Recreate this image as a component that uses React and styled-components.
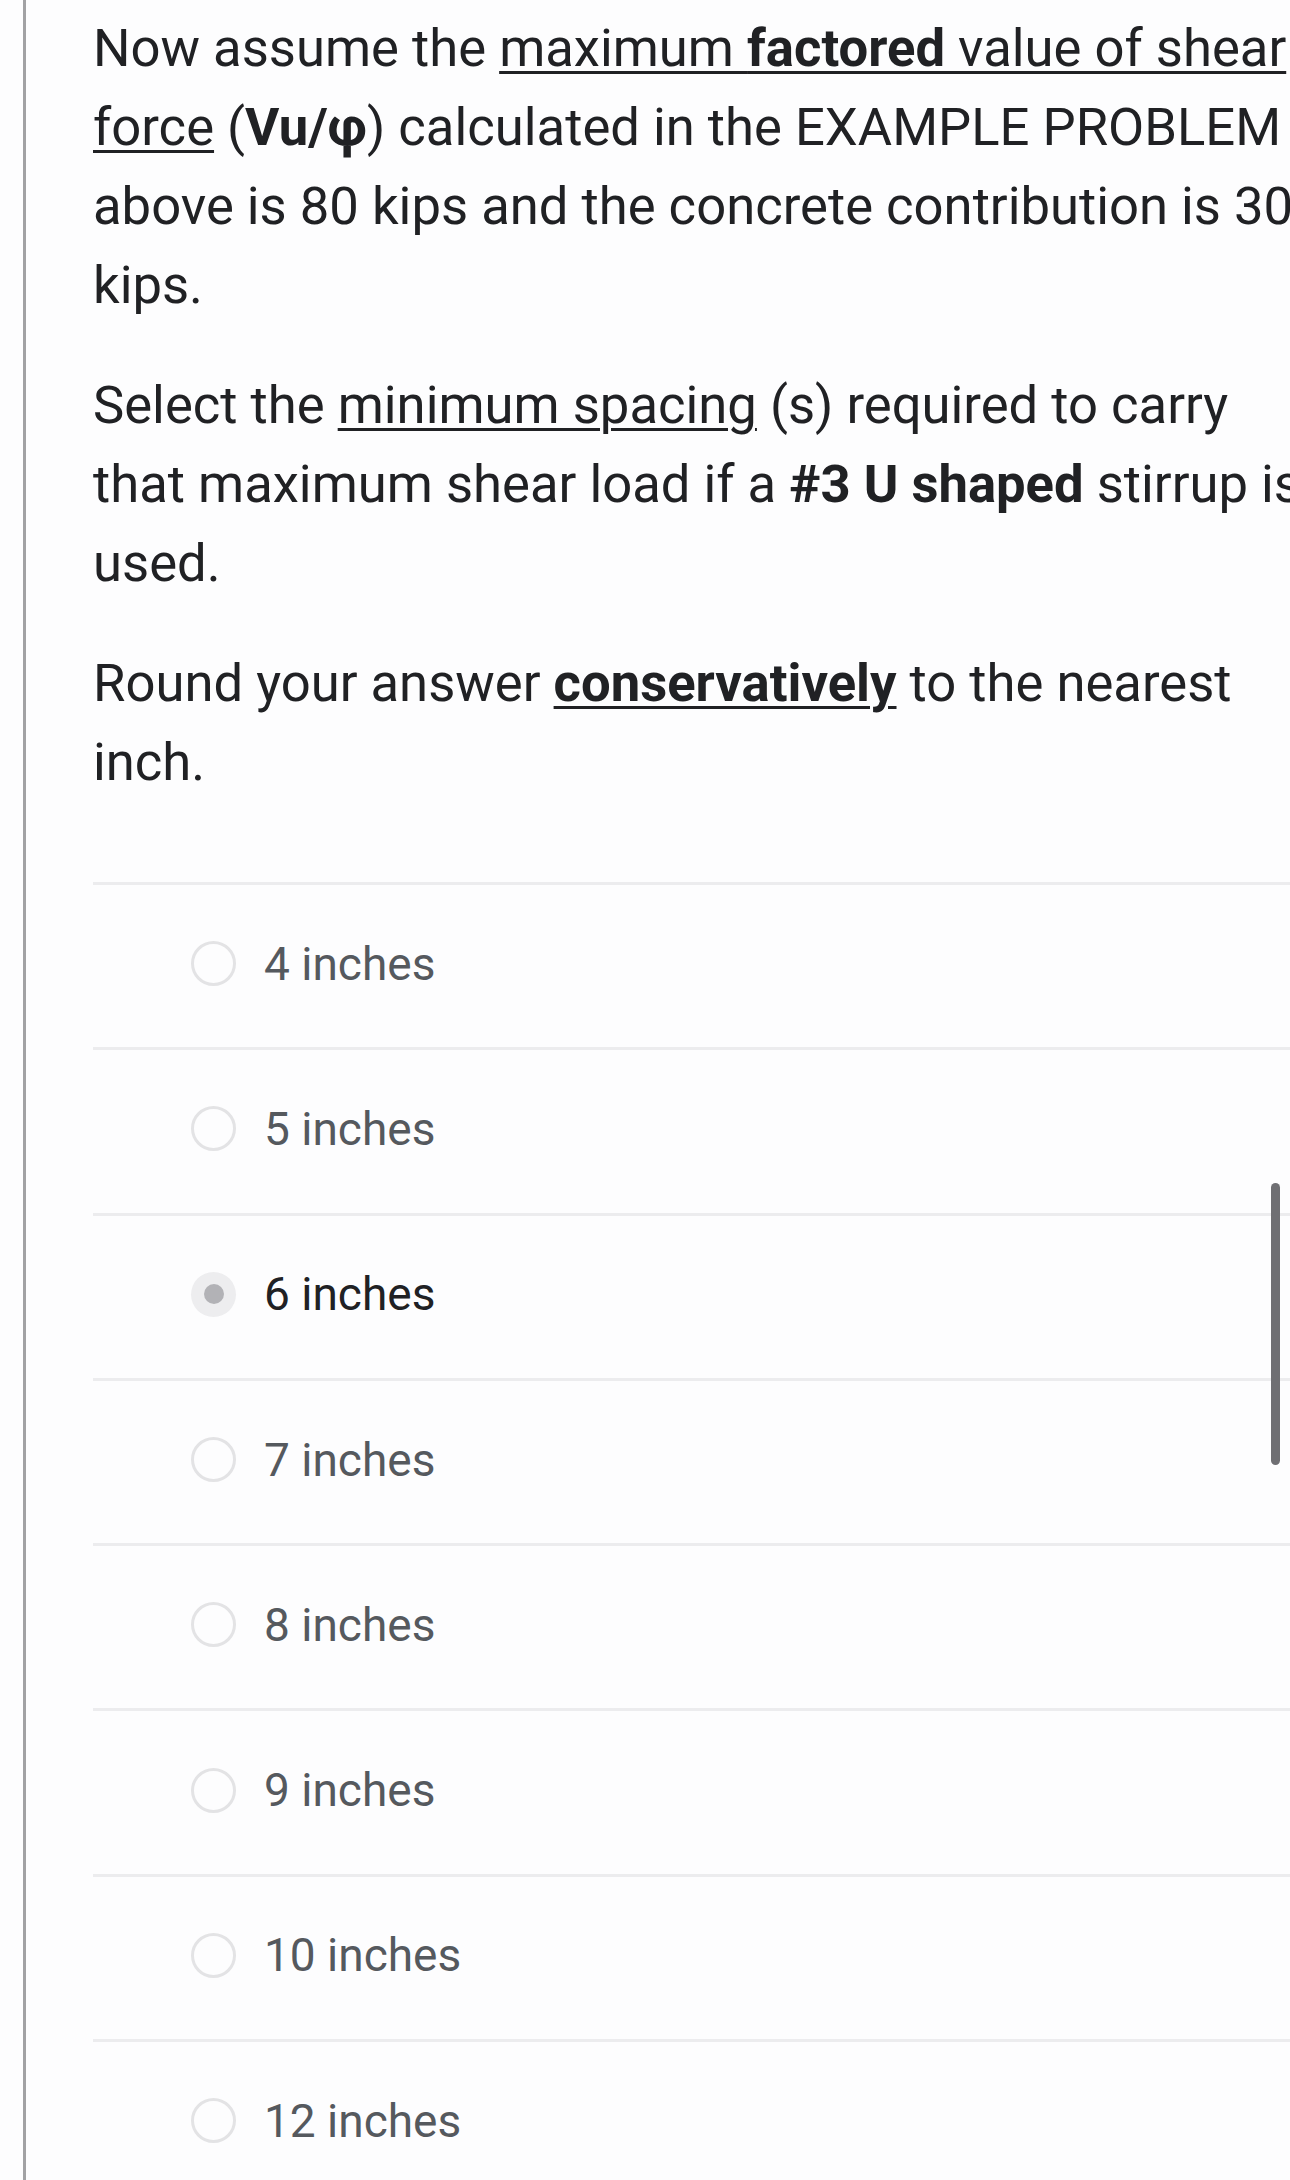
import React from 'react'
import styled, { createGlobalStyle } from 'styled-components'

const GlobalStyle = createGlobalStyle`
  html, body {
    margin: 0;
    padding: 0;
    background: #fdfdfe;
  }
  body {
    font-family: Roboto, "Liberation Sans", Arial, sans-serif;
    overflow: hidden;
  }
`

const Page = styled.div`
  position: relative;
  width: 1290px;
  height: 2180px;
  overflow: hidden;
  background: #fdfdfe;
`

const Card = styled.div`
  margin-left: 23px;
  width: 1500px;
  min-height: 100%;
  box-sizing: border-box;
  border-left: 3px solid #a2a2a4;
  padding: 9px 0 0 67px;
`

const Question = styled.div`
  width: 1232px;
  color: #202124;
  font-size: 52.6px;
  line-height: 79px;
`

const Para = styled.p`
  margin: 0 0 41px;
  &:last-child {
    margin-bottom: 0;
  }
`

const Strong = styled.b`
  font-weight: 700;
`

const Under = styled.span`
  text-decoration: underline;
  text-decoration-thickness: 3px;
  text-underline-offset: 5px;
`

const OptionList = styled.div`
  margin-top: 80px;
`

const Option = styled.label`
  display: flex;
  align-items: center;
  box-sizing: border-box;
  height: 165.3px;
  padding: 0 0 5px 98px;
  border-top: 3px solid #ececee;
  font-size: 46px;
  color: ${p => (p.$selected ? '#202124' : '#55595e')};
`

const Radio = styled.span`
  flex: none;
  width: 45px;
  height: 45px;
  box-sizing: border-box;
  border-radius: 50%;
  margin-right: 28px;
  border: ${p => (p.$selected ? 'none' : '3px solid #e3e3e5')};
  background: ${p => (p.$selected ? '#ededef' : 'transparent')};
  display: flex;
  align-items: center;
  justify-content: center;

  &::after {
    content: '';
    display: ${p => (p.$selected ? 'block' : 'none')};
    width: 20px;
    height: 20px;
    border-radius: 50%;
    background: #b2b2b6;
  }
`

const Scrollbar = styled.div`
  position: absolute;
  left: 1271px;
  top: 1183px;
  width: 9px;
  height: 282px;
  border-radius: 5px;
  background: #6f6f73;
`

const options = ['4 inches', '5 inches', '6 inches', '7 inches', '8 inches', '9 inches', '10 inches', '12 inches']

export default function App() {
  const selected = '6 inches'
  return (
    <>
      <GlobalStyle />
      <Page>
        <Card>
          <Question>
            <Para>
              Now assume the <Under>maximum <Strong>factored</Strong> value of shear force</Under>{' '}
              (<Strong>Vu/φ</Strong>) calculated in the EXAMPLE PROBLEM above is 80 kips and the
              concrete contribution is 30 kips.
            </Para>
            <Para>
              Select the <Under>minimum spacing</Under> (s) required to carry that maximum shear load
              if a <Strong>#3 U shaped</Strong> stirrup is used.
            </Para>
            <Para>
              Round your answer <Under><Strong>conservatively</Strong></Under> to the nearest inch.
            </Para>
          </Question>
          <OptionList>
            {options.map(o => (
              <Option key={o} $selected={o === selected}>
                <Radio $selected={o === selected} />
                {o}
              </Option>
            ))}
          </OptionList>
        </Card>
        <Scrollbar />
      </Page>
    </>
  )
}
